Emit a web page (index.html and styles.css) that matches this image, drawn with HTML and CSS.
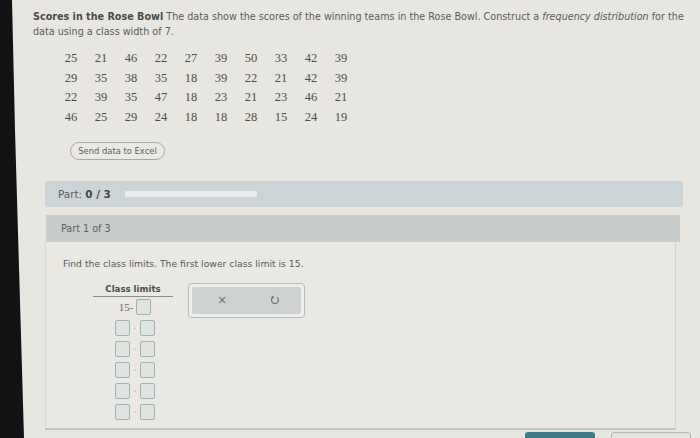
FILE: index.html
```html
<!DOCTYPE html>
<html lang="en">
<head>
  <meta charset="UTF-8" />
  <title>Scores in the Rose Bowl</title>
  <link rel="stylesheet" href="styles.css">
</head>
<body>

<div class="frame"></div>

<div class="page">
  <p class="question">
    <b>Scores in the Rose Bowl</b> The data show the scores of the winning teams in the Rose Bowl. Construct a <i>frequency distribution</i> for the data using a class width of 7.
  </p>

  <div class="data">
    <span>25</span><span>21</span><span>46</span><span>22</span><span>27</span><span>39</span><span>50</span><span>33</span><span>42</span><span>39</span>
    <span>29</span><span>35</span><span>38</span><span>35</span><span>18</span><span>39</span><span>22</span><span>21</span><span>42</span><span>39</span>
    <span>22</span><span>39</span><span>35</span><span>47</span><span>18</span><span>23</span><span>21</span><span>23</span><span>46</span><span>21</span>
    <span>46</span><span>25</span><span>29</span><span>24</span><span>18</span><span>18</span><span>28</span><span>15</span><span>24</span><span>19</span>
  </div>

  <button class="excel">Send data to Excel</button>

  <div class="progress">
    <span>Part: <b>0 / 3</b></span>
    <div class="track"></div>
  </div>

  <div class="part-head">Part 1 of 3</div>

  <div class="part-body">
    <p class="prompt">Find the class limits. The first lower class limit is 15.</p>

    <div class="work">
      <div class="limits">
        <div class="limits-head">Class limits</div>
        <div class="limit-row"><span class="fixed">15-</span><span class="box"></span></div>
        <div class="limit-row"><span class="box"></span><span class="dash">-</span><span class="box"></span></div>
        <div class="limit-row"><span class="box"></span><span class="dash">-</span><span class="box"></span></div>
        <div class="limit-row"><span class="box"></span><span class="dash">-</span><span class="box"></span></div>
        <div class="limit-row"><span class="box"></span><span class="dash">-</span><span class="box"></span></div>
        <div class="limit-row"><span class="box"></span><span class="dash">-</span><span class="box"></span></div>
      </div>

      <div class="tools">
        <div class="tools-inner">
          <span class="tool">&#x2715;</span>
          <span class="tool">
            <svg width="10" height="10" viewBox="0 0 10 10">
              <path d="M3 2.2 A3.5 3.5 0 1 0 6.8 2.1" fill="none" stroke="#6d6f6e" stroke-width="1.1"/>
              <path d="M1.8 0.8 L3.4 2.3 L1.6 3.4" fill="none" stroke="#6d6f6e" stroke-width="1.1"/>
            </svg>
          </span>
        </div>
      </div>
    </div>
  </div>

  <div class="footer">
    <button class="btn-main"></button>
    <button class="btn-side"></button>
  </div>
</div>

</body>
</html>
```

FILE: styles.css
```css
body {
  margin: 0;
  padding: 0;
  width: 700px;
  height: 438px;
  overflow: hidden;
  background: #e8e6e0;
  font-family: 'DejaVu Sans', sans-serif;
  color: #5b5c5c;
  position: relative;
}
.frame {
  position: absolute;
  top: 0; left: 0; bottom: 0;
  width: 25px;
  background: #111214;
  clip-path: polygon(0 0, 12px 0, 15px 130px, 24px 100%, 0 100%);
  z-index: 10;
}
.page {
  display: flex;
  flex-direction: column;
  align-items: flex-start;
}
.question {
  margin: 9px 0 0 33px;
  width: 660px;
  font-size: 9.65px;
  line-height: 15px;
}
.question b {
  color: #4a4b4b;
}
.data {
  display: grid;
  grid-template-columns: repeat(10, 30px);
  margin: 10px 0 0 56px;
  font-family: 'Liberation Serif', serif;
  font-size: 12.5px;
  line-height: 19.7px;
  color: #4c4d4d;
  text-align: center;
}
.excel {
  margin: 14px 0 0 70px;
  height: 18px;
  width: 95px;
  padding: 0;
  border: 1px solid #a9aaa7;
  border-radius: 9px;
  background: #ebe9e4;
  font-family: 'DejaVu Sans', sans-serif;
  font-size: 8.4px;
  color: #5e5f5f;
}
.progress {
  margin: 21px 0 0 45px;
  width: 638px;
  height: 26px;
  background: #cdd4d7;
  border-radius: 3px;
  display: flex;
  align-items: center;
  gap: 14px;
  padding-left: 13px;
  box-sizing: border-box;
  font-size: 10.4px;
}
.progress b {
  color: #454646;
}
.track {
  width: 132px;
  height: 6px;
  background: #e9ecec;
  border-radius: 1px;
}
.part-head {
  margin: 8px 0 0 46px;
  width: 634px;
  height: 27px;
  background: #c8ccca;
  display: flex;
  align-items: center;
  padding-left: 15px;
  box-sizing: border-box;
  font-size: 9.6px;
  color: #606161;
}
.part-body {
  margin-left: 45px;
  width: 631px;
  height: 188px;
  box-sizing: border-box;
  background: #eae8e3;
  border-left: 1px solid #d7d7d2;
  border-right: 1px solid #d2d3ce;
  border-bottom: 2px solid #c3c5c1;
  padding: 16px 0 0 17px;
}
.prompt {
  margin: 0;
  font-size: 9.25px;
  line-height: 12px;
  color: #58595a;
}
.work {
  display: flex;
  align-items: flex-start;
  gap: 15px;
  margin: 13px 0 0 30px;
}
.limits {
  width: 80px;
  display: flex;
  flex-direction: column;
  align-items: center;
}
.limits-head {
  width: 100%;
  text-align: center;
  font-size: 8.6px;
  font-weight: bold;
  color: #4d4e4e;
  line-height: 13px;
  border-bottom: 1px solid #8b8c8b;
  margin-bottom: 3px;
}
.limit-row {
  display: flex;
  align-items: center;
  height: 15px;
  margin: 0 0 6px 4px;
}
.fixed {
  font-family: 'Liberation Serif', serif;
  font-size: 11px;
  color: #6a6b6b;
  margin-right: 3px;
}
.box {
  width: 13px;
  height: 14px;
  border: 1px solid #9fb4b1;
  border-radius: 2px;
  background: #dfe3e1;
}
.dash {
  width: 10px;
  text-align: center;
  font-size: 7px;
  color: #8a9c99;
}
.tools {
  padding: 3px;
  background: #eeeeeb;
  border: 1px solid #b9bbb8;
  border-radius: 4px;
}
.tools-inner {
  width: 109px;
  height: 27px;
  padding-left: 4px;
  box-sizing: border-box;
  background: #cdd1cf;
  border-radius: 2px;
  display: flex;
  align-items: center;
  justify-content: space-around;
}
.tool {
  font-size: 11px;
  color: #747675;
  display: flex;
}
.footer {
  display: flex;
  gap: 16px;
  margin: 2px 0 0 525px;
}
.btn-main {
  width: 70px;
  height: 20px;
  border: none;
  border-radius: 3px;
  background: #3f7c86;
}
.btn-side {
  width: 80px;
  height: 20px;
  border: 1px solid #b6b8b5;
  border-radius: 3px;
  background: #e2e2df;
}
```
